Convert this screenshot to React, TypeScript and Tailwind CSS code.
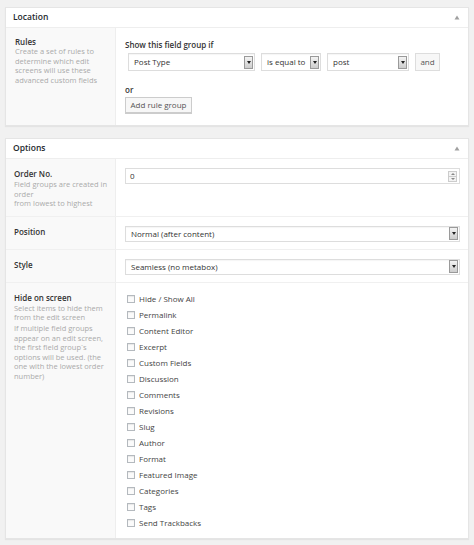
import React from 'react';

const hideItems = [
  'Hide / Show All',
  'Permalink',
  'Content Editor',
  'Excerpt',
  'Custom Fields',
  'Discussion',
  'Comments',
  'Revisions',
  'Slug',
  'Author',
  'Format',
  'Featured Image',
  'Categories',
  'Tags',
  'Send Trackbacks',
];

function Toggle() {
  return (
    <svg width="6" height="5" viewBox="0 0 6 5" className="text-[#a0a0a0]">
      <path d="M3 0.5 L5.5 4.5 L0.5 4.5 Z" fill="currentColor" />
    </svg>
  );
}

function Panel({ title, children }: { title: string; children: React.ReactNode }) {
  return (
    <div className="border border-[#e5e5e5] bg-white shadow-[0_1px_1px_rgba(0,0,0,0.05)]">
      <div className="flex h-[20px] items-center justify-between border-b border-[#eee] pl-[7px] pr-[8px]">
        <h3 className="text-[8.5px] font-semibold text-[#23282d]">{title}</h3>
        <Toggle />
      </div>
      {children}
    </div>
  );
}

function Row({
  label,
  children,
  desc,
  first,
}: {
  label: string;
  children: React.ReactNode;
  desc?: React.ReactNode;
  first?: boolean;
}) {
  return (
    <div className={`flex ${first ? '' : 'border-t border-[#f0f0f0]'}`}>
      <div className="w-[110px] shrink-0 border-r border-[#eee] bg-[#f9f9f9] pb-[7px] pl-[8px] pr-[6px] pt-[9px]">
        <div className="text-[8px] leading-[11px] font-semibold text-[#333]">{label}</div>
        {desc && <div className="mt-[1px] text-[7.5px] leading-[9.6px] text-[#aaa]">{desc}</div>}
      </div>
      <div className="flex-1 pb-[7px] pl-[9px] pr-[8px] pt-[9px]">{children}</div>
    </div>
  );
}

function Arrow() {
  return (
    <span className="flex h-[13px] w-[9px] items-center justify-center border border-[#9a9a9a] bg-linear-to-b from-[#f4f4f4] to-[#cdcdcd]">
      <span className="h-0 w-0 border-x-[2.5px] border-t-[3px] border-x-transparent border-t-[#222]" />
    </span>
  );
}

function Select({ value, tall, className = '' }: { value: string; tall?: boolean; className?: string }) {
  return (
    <div
      className={`flex items-center justify-between border border-[#ddd] bg-white pl-[5px] pr-[1px] shadow-[inset_0_1px_1px_rgba(0,0,0,0.04)] ${
        tall ? 'h-[18px]' : 'h-[16px]'
      } ${className}`}
    >
      <span className="text-[8px] text-[#333]">{value}</span>
      <Arrow />
    </div>
  );
}

function Spinner() {
  return (
    <span className="flex h-[11px] w-[9px] flex-col items-center justify-center gap-[1px] border border-[#ccc] bg-[#f3f3f3]">
      <span className="h-0 w-0 border-x-[2px] border-b-[2.5px] border-x-transparent border-b-[#888]" />
      <span className="h-px w-[7px] bg-[#ccc]" />
      <span className="h-0 w-0 border-x-[2px] border-t-[2.5px] border-x-transparent border-t-[#888]" />
    </span>
  );
}

export default function App() {
  return (
    <div className="h-[545px] w-[474px] bg-[#f1f1f1] pl-[5px] pt-[7px] font-['Open_Sans',sans-serif]">
      <div className="flex w-[464px] flex-col gap-[12px]">
        <Panel title="Location">
          <div className="flex">
            <div className="w-[110px] shrink-0 border-r border-[#eee] bg-[#f9f9f9] pb-[8px] pl-[9px] pr-[6px] pt-[8px]">
              <div className="text-[8px] leading-[11px] font-semibold text-[#333]">Rules</div>
              <div className="text-[7.5px] leading-[9.6px] text-[#aaa]">
                Create a set of rules to determine which edit screens will use these advanced custom fields
              </div>
            </div>
            <div className="flex-1 pb-[12px] pl-[9px] pr-[8px] pt-[11px]">
              <div className="text-[8px] leading-[11px] font-semibold text-[#333]">Show this field group if</div>
              <div className="mt-[3px] flex items-center gap-[6px] pl-[3px]">
                <Select tall value="Post Type" className="w-[127px]" />
                <Select tall value="is equal to" className="w-[60px]" />
                <Select tall value="post" className="w-[82px]" />
                <button className="h-[18px] w-[25px] border border-[#ddd] bg-[#f7f7f7] text-[8px] text-[#555]">
                  and
                </button>
              </div>
              <div className="mt-[13px] text-[8px] leading-[11px] font-semibold text-[#333]">or</div>
              <button className="mt-[2px] block h-[16px] w-[67px] border border-[#ccc] bg-[#f7f7f7] text-[8px] text-[#555] shadow-[0_1px_0_#ccc]">
                Add rule group
              </button>
            </div>
          </div>
        </Panel>

        <Panel title="Options">
          <Row
            first
            label="Order No."
            desc={
              <>
                <div>Field groups are created in order</div>
                <div>from lowest to highest</div>
              </>
            }
          >
            <div className="flex h-[16px] items-center justify-between border border-[#ddd] bg-white pl-[4px] pr-[2px]">
              <span className="text-[8px] text-[#333]">0</span>
              <Spinner />
            </div>
          </Row>
          <Row label="Position">
            <Select value="Normal (after content)" />
          </Row>
          <Row label="Style">
            <Select value="Seamless (no metabox)" />
          </Row>
          <Row
            label="Hide on screen"
            desc={
              <>
                <div>Select items to hide them from the edit screen</div>
                <div className="mt-[1px]">
                  If multiple field groups appear on an edit screen, the first field group`s options will be used. (the
                  one with the lowest order number)
                </div>
              </>
            }
          >
            <ul className="-mt-[1px]">
              {hideItems.map((item) => (
                <li key={item} className="flex h-[16px] items-center gap-[4px] pl-[2px]">
                  <span className="h-[8px] w-[8px] border border-[#b4b9be] bg-[#fbfbfb] shadow-[inset_0_1px_1px_rgba(0,0,0,0.08)]" />
                  <span className="text-[8px] text-[#444]">{item}</span>
                </li>
              ))}
            </ul>
          </Row>
        </Panel>
      </div>
    </div>
  );
}
